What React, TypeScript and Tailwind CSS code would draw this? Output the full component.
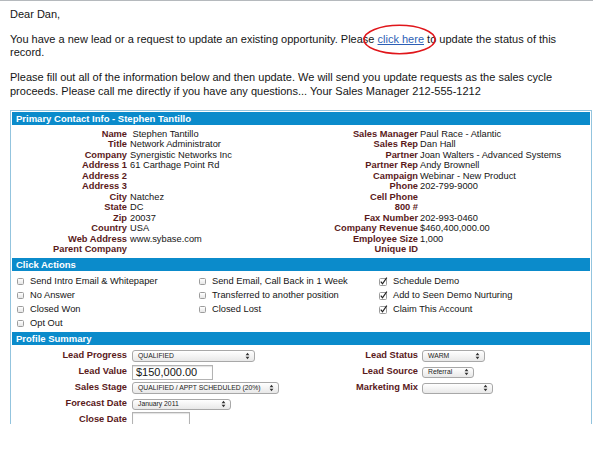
import React from 'react';

const contactLeft: [string, string][] = [
  ['Name', '\u00a0Stephen Tantillo'],
  ['Title', 'Network Administrator'],
  ['Company', 'Synergistic Networks Inc'],
  ['Address 1', '61 Carthage Point Rd'],
  ['Address 2', ''],
  ['Address 3', ''],
  ['City', 'Natchez'],
  ['State', 'DC'],
  ['Zip', '20037'],
  ['Country', 'USA'],
  ['Web Address', 'www.sybase.com'],
  ['Parent Company', ''],
];

const contactRight: [string, string][] = [
  ['Sales Manager', 'Paul Race - Atlantic'],
  ['Sales Rep', 'Dan Hall'],
  ['Partner', 'Joan Walters - Advanced Systems'],
  ['Partner Rep', 'Andy Brownell'],
  ['Campaign', 'Webinar - New Product'],
  ['Phone', '202-799-9000'],
  ['Cell Phone', ''],
  ['800 #', ''],
  ['Fax Number', '202-993-0460'],
  ['Company Revenue', '$460,400,000.00'],
  ['Employee Size', '1,000'],
  ['Unique ID', ''],
];

const SectionBar = ({ title }: { title: string }) => (
  <div className="h-[13px] bg-[#0b8bcb] pl-[4px] text-[9.5px] font-bold leading-[13px] text-white whitespace-nowrap">
    {title}
  </div>
);

const Box = () => (
  <span className="inline-block h-[7px] w-[7px] shrink-0 rounded-[1.5px] border border-[#9c9c9c] bg-gradient-to-b from-white to-[#e6e6e6]" />
);

const Checked = () => (
  <svg width="9" height="9" viewBox="0 0 9 9" className="shrink-0">
    <rect x="0.5" y="1.5" width="7" height="7" rx="1" fill="#fff" stroke="#9c9c9c" />
    <path d="M1.8 4.6 L3.5 6.8 L7.8 0.6" fill="none" stroke="#222" strokeWidth="1.2" />
  </svg>
);

const Arrows = () => (
  <svg width="5" height="8" viewBox="0 0 5 8" className="mr-[4px] shrink-0">
    <path d="M0.6 3.2 L2.5 0.8 L4.4 3.2Z M0.6 4.8 L2.5 7.2 L4.4 4.8Z" fill="#333" />
  </svg>
);

const Select = ({ text, className }: { text: string; className: string }) => (
  <div
    className={`flex items-center rounded-[3px] border border-[#a8a8a8] bg-gradient-to-b from-white to-[#e8e8e8] pl-[5px] text-[6.8px] text-[#222] ${className}`}
  >
    <span className="flex-1 whitespace-nowrap leading-none">{text}</span>
    <Arrows />
  </div>
);

const ActionItem = ({ label, checked }: { label: string; checked?: boolean }) => (
  <div className="flex h-[14px] items-center whitespace-nowrap">
    {checked ? <Checked /> : <Box />}
    <span className={checked ? 'ml-[5px]' : 'ml-[6px]'}>{label}</span>
  </div>
);

const Label = ({ children, className }: { children: React.ReactNode; className: string }) => (
  <div className={`shrink-0 text-right font-bold text-[#5a1a1b] whitespace-nowrap ${className}`}>{children}</div>
);

export default function App() {
  return (
    <div className="h-[456px] w-[599px] overflow-hidden bg-white font-['Liberation_Sans',Arial,sans-serif] text-[#151515]">
      <div className="h-px w-[593px] bg-[#b5b9bd]" />

      {/* Letter text */}
      <div className="pl-[10px] pt-[7px] text-[11px] leading-[13.5px] whitespace-nowrap">
        <p>Dear Dan,</p>
        <p className="mt-[11px]">
          You have a new lead or a request to update an existing opportunity. Please{' '}
          <span className="relative inline-block">
            <a href="#" className="text-[#2d5fb5] underline">
              click here
            </a>
            <svg
              width="73"
              height="31"
              viewBox="0 0 73 31"
              className="pointer-events-none absolute left-[-15px] top-[-9px]"
            >
              <ellipse cx="36.5" cy="15.5" rx="35.5" ry="14.3" fill="none" stroke="#e0161b" strokeWidth="1.6" />
            </svg>
          </span>{' '}
          to update the status of this
          <br />
          record.
        </p>
        <p className="mt-[11.5px]">
          Please fill out all of the information below and then update. We will send you update requests as the sales cycle
          <br />
          proceeds. Please call me directly if you have any questions... Your Sales Manager 212-555-1212
        </p>
      </div>

      {/* Form panel */}
      <div className="ml-[10px] mt-[12px] h-[314px] w-[582px] overflow-hidden border border-b-0 border-[#93c4de] px-px pt-px">
        <SectionBar title="Primary Contact Info - Stephen Tantillo" />
        <div className="flex pt-[4px] pb-[4px] text-[9.3px] leading-[10.45px]">
          <div className="w-[290px]">
            {contactLeft.map(([k, v]) => (
              <div key={k} className="flex">
                <Label className="w-[115px]">{k}</Label>
                <div className="pl-[3px] whitespace-nowrap">{v}</div>
              </div>
            ))}
          </div>
          <div className="flex-1">
            {contactRight.map(([k, v]) => (
              <div key={k} className="flex">
                <Label className="w-[116px]">{k}</Label>
                <div className="pl-[2px] whitespace-nowrap">{v}</div>
              </div>
            ))}
          </div>
        </div>

        <SectionBar title="Click Actions" />
        <div className="grid grid-cols-[182px_180px_1fr] pl-[5px] pt-[3.5px] pb-[1.5px] text-[9.3px]">
          <div>
            <ActionItem label="Send Intro Email & Whitepaper" />
            <ActionItem label="No Answer" />
            <ActionItem label="Closed Won" />
            <ActionItem label="Opt Out" />
          </div>
          <div>
            <ActionItem label="Send Email, Call Back in 1 Week" />
            <ActionItem label="Transferred to another position" />
            <ActionItem label="Closed Lost" />
          </div>
          <div>
            <ActionItem label="Schedule Demo" checked />
            <ActionItem label="Add to Seen Demo Nurturing" checked />
            <ActionItem label="Claim This Account" checked />
          </div>
        </div>

        <SectionBar title="Profile Summary" />
        <div className="flex pt-[3px] text-[9.3px]">
          <div className="w-[290px]">
            <div className="flex h-[16px] items-center">
              <Label className="w-[115px]">Lead Progress</Label>
              <Select text="QUALIFIED" className="ml-[5px] h-[12px] w-[123px]" />
            </div>
            <div className="flex h-[16px] items-center">
              <Label className="w-[115px]">Lead Value</Label>
              <div className="ml-[5px] flex h-[15px] w-[81px] items-center border border-[#b3b3b3] pl-[3px] text-[11px] leading-none shadow-[inset_0_1px_1px_rgba(0,0,0,0.12)]">
                $150,000.00
              </div>
            </div>
            <div className="flex h-[16px] items-center">
              <Label className="w-[115px]">Sales Stage</Label>
              <Select text="QUALIFIED / APPT SCHEDULED (20%)" className="ml-[5px] h-[12px] w-[147px]" />
            </div>
            <div className="flex h-[16px] items-center">
              <Label className="w-[115px]">Forecast Date</Label>
              <Select text="January 2011" className="ml-[5px] h-[11px] w-[99px]" />
            </div>
            <div className="flex h-[16px] items-start">
              <Label className="mt-[1px] w-[115px]">Close Date</Label>
              <div className="ml-[5px] h-[16px] w-[58px] border border-[#b3b3b3] shadow-[inset_0_1px_1px_rgba(0,0,0,0.12)]" />
            </div>
          </div>
          <div className="flex-1">
            <div className="flex h-[16px] items-center">
              <Label className="w-[116px]">Lead Status</Label>
              <Select text="WARM" className="ml-[4px] h-[12px] w-[63px]" />
            </div>
            <div className="flex h-[16px] items-center">
              <Label className="w-[116px]">Lead Source</Label>
              <Select text="Referral" className="ml-[4px] h-[11px] w-[52px]" />
            </div>
            <div className="flex h-[16px] items-center">
              <Label className="w-[116px]">Marketing Mix</Label>
              <Select text="" className="ml-[4px] h-[11px] w-[71px]" />
            </div>
          </div>
        </div>
      </div>
    </div>
  );
}
